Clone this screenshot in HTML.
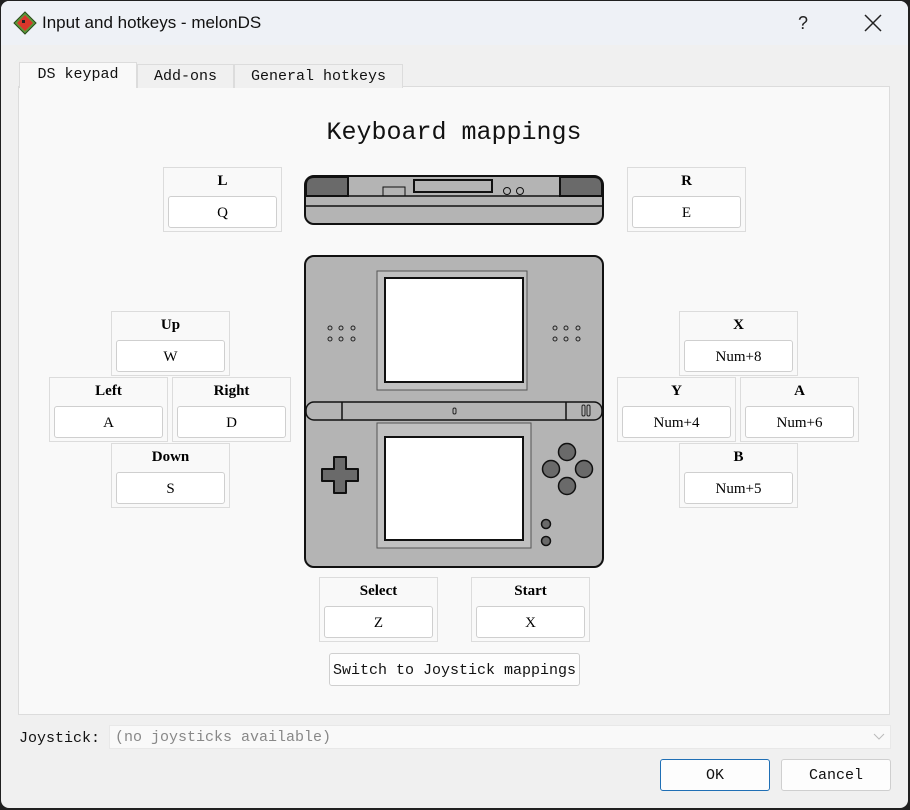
<!DOCTYPE html>
<html><head><meta charset="utf-8"><style>
*{box-sizing:border-box;margin:0;padding:0}
body{width:910px;height:810px;background:#202020;position:relative;overflow:hidden;font-family:"Liberation Mono",monospace}
.win{position:absolute;left:1px;top:1px;width:907px;height:807px;background:#f0f0f0;border-radius:8px;overflow:hidden}
.tb{position:absolute;left:0;top:0;width:100%;height:44px;background:#eef1f6}
.ttl{position:absolute;left:41px;top:12px;font:17px "Liberation Sans",sans-serif;color:#111}
.abs{position:absolute}
.pane{position:absolute;left:17px;top:85px;width:872px;height:629px;background:#f9f9f9;border:1px solid #dcdcdc}
.tab{position:absolute;height:24px;border:1px solid #dcdcdc;border-bottom:none;background:#f0f0f0;font-size:15px;text-align:center;line-height:24px;color:#111}
.grp{position:absolute;width:119px;height:65px;border:1px solid #dcdcdc}
.grp b{position:absolute;left:0;right:0;top:5px;text-align:center;font-size:15px;font-family:"Liberation Serif",serif;font-weight:bold}
.grp span{position:absolute;left:4px;right:4px;top:28px;height:32px;background:#fff;border:1px solid #cfcfcf;border-radius:3px;text-align:center;line-height:32px;font-size:15px;font-family:"Liberation Serif",serif}
.btn{position:absolute;background:#fdfdfd;border:1px solid #cfcfcf;border-radius:3px;text-align:center;font-size:15px;color:#111}
</style></head><body>
<div class="win">
<div class="tb"></div>
<svg class="abs" style="left:12px;top:10px" width="24" height="24" viewBox="0 0 24 24"><path d="M12 1 L23 12 L12 23 L1 12Z" fill="#5a9a3a" stroke="#2a4a1a"/><path d="M12 4 L20 12 L12 20 L4 12Z" fill="#d9362b"/><rect x="9" y="9" width="3" height="3" fill="#222"/></svg>
<div class="ttl">Input and hotkeys - melonDS</div>
<div class="abs" style="left:797px;top:12px;font:18px 'Liberation Sans',sans-serif;color:#222">?</div>
<svg class="abs" style="left:863px;top:13px" width="18" height="18"><path d="M1 1L17 17M17 1L1 17" stroke="#222" stroke-width="1.5"/></svg>

<div class="pane"></div>
<div class="tab" style="left:136px;top:63px;width:97px">Add-ons</div>
<div class="tab" style="left:233px;top:63px;width:169px">General hotkeys</div>
<div class="tab" style="left:18px;top:61px;width:118px;height:26px;background:#f9f9f9">DS keypad</div>

<div class="abs" style="left:0;width:906px;top:117px;text-align:center;font-size:25px;color:#111">Keyboard mappings</div>

<div class="grp" style="left:162px;top:166px"><b>L</b><span>Q</span></div>
<div class="grp" style="left:626px;top:166px"><b>R</b><span>E</span></div>
<div class="grp" style="left:110px;top:310px"><b>Up</b><span>W</span></div>
<div class="grp" style="left:48px;top:376px"><b>Left</b><span>A</span></div>
<div class="grp" style="left:171px;top:376px"><b>Right</b><span>D</span></div>
<div class="grp" style="left:110px;top:442px"><b>Down</b><span>S</span></div>
<div class="grp" style="left:678px;top:310px"><b>X</b><span>Num+8</span></div>
<div class="grp" style="left:616px;top:376px"><b>Y</b><span>Num+4</span></div>
<div class="grp" style="left:739px;top:376px"><b>A</b><span>Num+6</span></div>
<div class="grp" style="left:678px;top:442px"><b>B</b><span>Num+5</span></div>
<div class="grp" style="left:318px;top:576px"><b>Select</b><span>Z</span></div>
<div class="grp" style="left:470px;top:576px"><b>Start</b><span>X</span></div>
<div class="btn" style="left:328px;top:652px;width:251px;height:33px;line-height:33px">Switch to Joystick mappings</div>

<svg class="abs" style="left:-1px;top:-1px" width="910" height="810">
<g stroke="#111" stroke-width="2">
<rect x="305" y="176" width="298" height="48" rx="9" fill="#b4b4b4"/>
<path d="M306 196 V185 Q306 177 314 177 H348 V196Z" fill="#6a6a6a"/>
<path d="M602 196 V185 Q602 177 594 177 H560 V196Z" fill="#6a6a6a"/>
<line x1="305" y1="196" x2="603" y2="196" stroke-width="1.5"/>
<line x1="305" y1="206" x2="603" y2="206" stroke-width="1.5"/>
<rect x="414" y="180" width="78" height="12" fill="#b4b4b4"/>
<path d="M383 196 V187 H405 V196" fill="none" stroke-width="1"/>
<circle cx="507" cy="191" r="3.5" fill="#b4b4b4" stroke-width="1"/>
<circle cx="520" cy="191" r="3.5" fill="#b4b4b4" stroke-width="1"/>
<rect x="305" y="256" width="298" height="311" rx="9" fill="#b4b4b4"/>
<rect x="306" y="402" width="296" height="18" rx="8" fill="#b4b4b4" stroke-width="1.5"/>
<line x1="342" y1="402" x2="342" y2="420" stroke-width="1.5"/>
<line x1="566" y1="402" x2="566" y2="420" stroke-width="1.5"/>
<rect x="377" y="271" width="150" height="119" fill="#c0c0c0" stroke="#555" stroke-width="1"/>
<rect x="385" y="278" width="138" height="104" fill="#fff"/>
<rect x="377" y="423" width="154" height="125" fill="#c0c0c0" stroke="#555" stroke-width="1"/>
<rect x="385" y="437" width="138" height="103" fill="#fff"/>
<path d="M334 457 h12 v12 h12 v12 h-12 v12 h-12 v-12 h-12 v-12 h12z" fill="#6a6a6a" stroke-linejoin="round"/>
<g fill="#6a6a6a" stroke-width="1.5"><circle cx="567" cy="452" r="8.5"/><circle cx="551" cy="469" r="8.5"/><circle cx="584" cy="469" r="8.5"/><circle cx="567" cy="486" r="8.5"/><circle cx="546" cy="524" r="4.5"/><circle cx="546" cy="541" r="4.5"/></g>
</g>
<g fill="none" stroke="#222" stroke-width="1">
<circle cx="330" cy="328" r="2"/><circle cx="341" cy="328" r="2"/><circle cx="353" cy="328" r="2"/>
<circle cx="330" cy="339" r="2"/><circle cx="341" cy="339" r="2"/><circle cx="353" cy="339" r="2"/>
<circle cx="555" cy="328" r="2"/><circle cx="566" cy="328" r="2"/><circle cx="578" cy="328" r="2"/>
<circle cx="555" cy="339" r="2"/><circle cx="566" cy="339" r="2"/><circle cx="578" cy="339" r="2"/>
<rect x="453" y="408" width="3" height="6" rx="1.5"/>
<rect x="582" y="405" width="3" height="11" rx="1.5"/><rect x="587" y="405" width="3" height="11" rx="1.5"/>
</g>
</svg>

<div class="abs" style="left:18px;top:729px;font-size:15px;color:#111">Joystick:</div>
<div class="abs" style="left:108px;top:724px;width:782px;height:24px;background:#f9f9f9;border:1px solid #e8e8e8;font-size:15px;color:#888;line-height:24px;padding-left:5px">(no joysticks available)</div>
<svg class="abs" style="left:872px;top:732px" width="12" height="8"><path d="M1 1L6 6L11 1" fill="none" stroke="#bbb"/></svg>
<div class="btn" style="left:659px;top:758px;width:110px;height:32px;line-height:32px;border:1px solid #1f6fb5">OK</div>
<div class="btn" style="left:780px;top:758px;width:110px;height:32px;line-height:32px">Cancel</div>
</div>
</body></html>
